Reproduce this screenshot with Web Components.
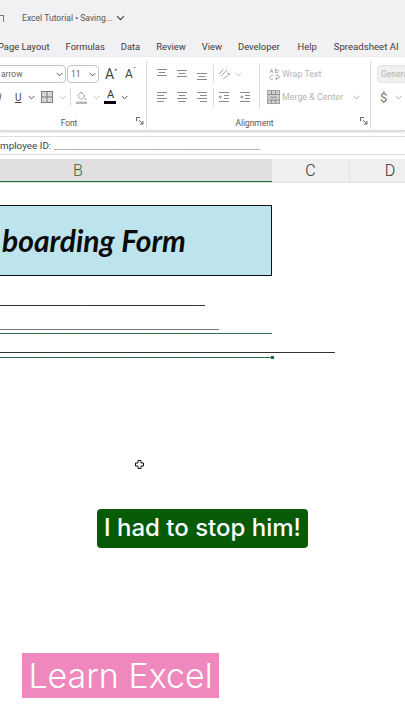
<!DOCTYPE html>
<html>
<head>
<meta charset="utf-8">
<title>Excel Tutorial</title>
<style>
  html, body { margin: 0; padding: 0; background: #fff; }
  body { width: 405px; height: 720px; overflow: hidden; position: relative; font-family: Roboto, sans-serif; }
</style>
</head>
<body>
  <excel-titlebar title-text="Excel Tutorial • Saving..."></excel-titlebar>
  <excel-tabs></excel-tabs>
  <excel-ribbon></excel-ribbon>
  <excel-formula-bar label="mployee ID:" blank="__________________________________________________________________"></excel-formula-bar>
  <excel-column-headers></excel-column-headers>
  <excel-sheet></excel-sheet>
  <sheet-cursor></sheet-cursor>
  <video-caption kind="green">I had to stop him!</video-caption>
  <video-caption kind="pink">Learn Excel</video-caption>

<script>
const CHEVRON = (color = '#555') =>
  `<svg width="7" height="5" viewBox="0 0 7 5"><path d="M.7 1l2.8 2.8L6.3 1" fill="none" stroke="${color}" stroke-width="1"/></svg>`;

const lines = (rows, color = '#8c8c8c') => {
  const body = rows.map(([x1, x2, y]) => `<path d="M${x1} ${y}H${x2}"/>`).join('');
  return `<svg width="12" height="12" viewBox="0 0 12 12" fill="none" stroke="${color}" stroke-width="1">${body}</svg>`;
};

const ICONS = {
  alignTop: lines([[1, 11, 1.5], [2.5, 9.5, 4.5], [1, 11, 7.5]]),
  alignMiddle: lines([[1, 11, 2.5], [2.5, 9.5, 5.5], [1, 11, 8.5]]),
  alignBottom: lines([[1, 11, 5.5], [2.5, 9.5, 8.5], [1, 11, 11.5]]),
  left: lines([[1, 11, 1.5], [1, 8, 4.5], [1, 11, 7.5], [1, 8, 10.5]]),
  center: lines([[1, 11, 1.5], [2.5, 9.5, 4.5], [1, 11, 7.5], [2.5, 9.5, 10.5]]),
  right: lines([[1, 11, 1.5], [4, 11, 4.5], [1, 11, 7.5], [4, 11, 10.5]]),
  outdent: `<svg width="12" height="12" viewBox="0 0 12 12" fill="none" stroke="#8c8c8c"><path d="M1 1.500h10M6 4.500h5M6 7.500h5M1 10.500h10M4 6H1M2.500 4.500L1 6l1.500 1.500"/></svg>`,
  indent: `<svg width="12" height="12" viewBox="0 0 12 12" fill="none" stroke="#8c8c8c"><path d="M1 1.500h10M6 4.500h5M6 7.500h5M1 10.500h10M1 6h3M2.500 4.500L4 6 2.500 7.500"/></svg>`,
  borders: `<svg width="12" height="12" viewBox="0 0 12 12" fill="#d8d8d8" stroke="#7d7d7d"><rect x=".5" y=".5" width="11" height="11"/><path d="M6 .5v11M.5 6h11" fill="none"/></svg>`,
  fill: `<svg width="13" height="13" viewBox="0 0 13 13"><path d="M6 1l4 4-3.500 3.500L2.500 5z" fill="none" stroke="#a5a5a5"/><path d="M10.500 6.500l1 2-1 .8-1-.8z" fill="#a5a5a5"/><rect x="1" y="10.500" width="11" height="2.500" fill="#b9b9b9"/></svg>`,
  orient: `<svg width="13" height="13" viewBox="0 0 13 13" fill="none" stroke="#a9a9a9"><path d="M1 6l4.500-4.500M3 8l6-6M5 11l7-5-3-1"/></svg>`,
  wrap: `<svg width="11" height="13" viewBox="0 0 11 13" fill="none" stroke="#b0b0b0"><path d="M1 5l1.500-4L4 5M1.500 3.500h2M6.500 .5v4.500M6.500 3.500a1.500 1.500 0 1 1 3 0 1.500 1.500 0 0 1-3 0z"/><path d="M4 7.500a2 2 0 0 0-3 2 2 2 0 0 0 3 2M6.500 7.500H9a1.500 1.500 0 0 1 0 3H6.500M8 9l-1.500 1.500L8 12"/></svg>`,
  merge: `<svg width="13" height="14" viewBox="0 0 13 14"><rect x=".5" y=".5" width="12" height="13" fill="#d0d0d0" stroke="#a0a0a0"/><path d="M1 4.500h11M1 10h11M4.500 1v3M8.500 1v3M4.500 10v3M8.500 10v3" stroke="#8f8f8f"/><path d="M3 7.200h7" stroke="#8f8f8f"/></svg>`,
  launcher: `<svg width="8" height="8" viewBox="0 0 8 8" fill="none" stroke="#666"><path d="M.5 4V.5H4M3 3l4 4M7 4v3H4"/></svg>`,
  italicEdge: `<svg width="3" height="9" viewBox="0 0 3 9" fill="none" stroke="#666"><path d="M2 .5L.5 8.500"/></svg>`
};

class ExcelTitlebar extends HTMLElement {
  connectedCallback () {
    const root = this.attachShadow({ mode: 'open' });
    root.innerHTML = `
      <style>
        :host { display: flex; align-items: center; height: 36px; background: #f1f0f2; color: #555; font-size: 8.600px; }
        .mark { width: 3px; height: 6px; border-top: 1px solid #777; border-right: 1px solid #777; margin-right: 18px; }
        svg { margin-left: 3px; margin-top: -1px; }
      </style>
      <span class="mark"></span><span>${this.getAttribute('title-text')}</span>${CHEVRON('#444').replace('width="7" height="5"', 'width="9" height="6"')}
    `;
  }
}

class ExcelTabs extends HTMLElement {
  connectedCallback () {
    const root = this.attachShadow({ mode: 'open' });
    const tabs = ['Page Layout', 'Formulas', 'Data', 'Review', 'View', 'Developer', 'Help', 'Spreadsheet AI'];
    root.innerHTML = `
      <style>
        :host { display: flex; gap: 16px; height: 21px; margin-left: -2px; align-items: center; background: #f1f0f2; color: #3c3c3c; font-size: 9.400px; white-space: nowrap; }
        .help { margin-left: 2px; }
        .ai { margin-left: 1px; font-size: 9.600px; }
      </style>
      ${tabs.map(t => `<span class="${t === 'Help' ? 'help' : t === 'Spreadsheet AI' ? 'ai' : ''}">${t}</span>`).join('')}
    `;
  }
}

class ExcelRibbon extends HTMLElement {
  connectedCallback () {
    const root = this.attachShadow({ mode: 'open' });
    root.innerHTML = `
      <style>
        :host { display: flex; height: 73px; background: #fff; border-bottom: 1px solid #d9d9d9; box-shadow: 0 1px 2px #cfcfcf; color: #555; font-size: 8px; overflow: hidden; position: relative; }
        .group { position: relative; display: flex; flex-direction: column; flex: none; box-sizing: border-box; height: 68px; margin-top: 4px; border-right: 1px solid #dcdcdc; }
        .font { width: 147px; }
        .align { width: 224px; }
        .number { width: 34px; border-right: 0; }
        .row { display: flex; align-items: center; height: 18px; flex: none; }
        .rows { display: flex; flex-direction: column; gap: 5px; padding-top: 4px; }
        .label { margin-top: auto; height: 13px; display: flex; align-items: center; padding-right: 8px; position: relative; }
        .label span { flex: 1; text-align: center; font-size: 8.400px; color: #555; }
        .label svg { position: absolute; right: 2px; top: 1px; }
        .combo { box-sizing: border-box; display: flex; align-items: center; justify-content: space-between; height: 18px; border: 1px solid #c4c4c4; border-radius: 4px; padding: 0 2px 0 0; font-size: 8.500px; color: #666; flex: none; }
        .grow { font-size: 14px; color: #444; line-height: 1; flex: none; }
        .grow sup { font-size: 7px; vertical-align: 5px; line-height: 0; }
        .sep { width: 1px; height: 18px; background: #dcdcdc; flex: none; }
        .tall { width: 1px; background: #dcdcdc; height: 46px; flex: none; }
        .muted { color: #b4b4b4; font-size: 8.900px; white-space: nowrap; flex: none; }
        .under { font-size: 10px; text-decoration: underline; color: #444; flex: none; }
        .color { display: flex; flex-direction: column; align-items: center; width: 12px; font-size: 11px; line-height: 10px; color: #333; flex: none; }
        .color i { display: block; width: 12px; height: 3px; background: #000; margin-top: 1px; }
        .row > svg { flex: none; }
        .cols { display: flex; }
        .ico { display: flex; flex: none; }
      </style>
      <div class="group font">
        <div class="rows">
          <div class="row">
            <div class="combo" style="width:72px;margin-left:-6px;padding-left:6px"><span>arrow</span>${CHEVRON()}</div>
            <div class="combo" style="width:32px;margin-left:1px;padding-left:3px"><span>11</span>${CHEVRON()}</div>
            <span class="grow" style="margin-left:6px">A<sup>^</sup></span>
            <span class="grow" style="margin-left:8px;font-size:12px">A<sup>ˇ</sup></span>
          </div>
          <div class="row">
            <span class="ico" style="margin-left:-1px">${ICONS.italicEdge}</span>
            <span class="under" style="margin-left:13px">U</span>
            <span class="ico" style="margin-left:7px">${CHEVRON()}</span>
            <span class="ico" style="margin-left:6px">${ICONS.borders}</span>
            <span class="ico" style="margin-left:6px">${CHEVRON('#c4c4c4')}</span>
            <span class="sep" style="margin-left:4px"></span>
            <span class="ico" style="margin-left:4px">${ICONS.fill}</span>
            <span class="ico" style="margin-left:5px">${CHEVRON('#c4c4c4')}</span>
            <span class="color" style="margin-left:4px">A<i></i></span>
            <span class="ico" style="margin-left:5px">${CHEVRON()}</span>
          </div>
        </div>
        <div class="label"><span>Font</span>${ICONS.launcher}</div>
      </div>
      <div class="group align">
        <div class="cols">
          <div class="rows">
            <div class="row">
              <span class="ico" style="margin-left:9px">${ICONS.alignTop}</span>
              <span class="ico" style="margin-left:8px">${ICONS.alignMiddle}</span>
              <span class="ico" style="margin-left:8px">${ICONS.alignBottom}</span>
              <span class="sep" style="margin-left:5px"></span>
              <span class="ico" style="margin-left:4px">${ICONS.orient}</span>
              <span class="ico" style="margin-left:4px">${CHEVRON('#c4c4c4')}</span>
            </div>
            <div class="row">
              <span class="ico" style="margin-left:9px">${ICONS.left}</span>
              <span class="ico" style="margin-left:8px">${ICONS.center}</span>
              <span class="ico" style="margin-left:8px">${ICONS.right}</span>
              <span class="sep" style="margin-left:5px"></span>
              <span class="ico" style="margin-left:4px">${ICONS.outdent}</span>
              <span class="ico" style="margin-left:9px">${ICONS.indent}</span>
            </div>
          </div>
          <span class="tall" style="margin-left:8px;margin-top:2px"></span>
          <div class="rows">
            <div class="row">
              <span class="ico" style="margin-left:9px">${ICONS.wrap}</span>
              <span class="muted" style="margin-left:2px">Wrap Text</span>
            </div>
            <div class="row">
              <span class="ico" style="margin-left:7px">${ICONS.merge}</span>
              <span class="muted" style="margin-left:2px">Merge &amp; Center</span>
              <span class="ico" style="margin-left:10px">${CHEVRON('#aaa')}</span>
            </div>
          </div>
        </div>
        <div class="label"><span>Alignment</span>${ICONS.launcher}</div>
      </div>
      <div class="group number">
        <div class="rows">
          <div class="row">
            <div class="combo" style="width:60px;margin-left:6px;padding-left:3px;background:#f0f0f0;border-color:#e4e4e4;color:#b0b0b0;justify-content:flex-start">Genera</div>
          </div>
          <div class="row">
            <span style="margin-left:9px;font-size:13px;color:#777">$</span>
            <span class="ico" style="margin-left:8px">${CHEVRON('#aaa')}</span>
          </div>
        </div>
      </div>
    `;
  }
}

class ExcelFormulaBar extends HTMLElement {
  connectedCallback () {
    const root = this.attachShadow({ mode: 'open' });
    root.innerHTML = `
      <style>
        :host { display: block; box-sizing: border-box; height: 19px; margin-top: 5px; background: #fff; border-top: 1px solid #dedede; border-bottom: 1px solid #dedede; font-size: 9.900px; line-height: 17px; color: #444; white-space: nowrap; overflow: hidden; }
        .clip { display: block; width: 260px; overflow: hidden; }
        .blank { color: #999; }
      </style>
      <span class="clip">${this.getAttribute('label')} <span class="blank">${this.getAttribute('blank')}</span></span>
    `;
  }
}

class ExcelColumnHeaders extends HTMLElement {
  connectedCallback () {
    const root = this.attachShadow({ mode: 'open' });
    root.innerHTML = `
      <style>
        :host { display: flex; box-sizing: border-box; height: 24px; margin-top: 4px; background: #efeef0; border-bottom: 1px solid #e2e2e2; font-size: 16px; font-weight: 300; color: #333; }
        span { display: flex; align-items: center; justify-content: center; box-sizing: border-box; flex: none; height: 23px; }
        .b { width: 272px; padding-left: 73px; background: #e1dfe0; color: #1e6e3e; border-bottom: 1px solid #1f6b3c; justify-content: flex-start; }
        .c { width: 78px; border-right: 1px solid #e2e2e2; }
        .d { width: 80px; }
      </style>
      <span class="b">B</span><span class="c">C</span><span class="d">D</span>
    `;
  }
}

class ExcelSheet extends HTMLElement {
  connectedCallback () {
    const root = this.attachShadow({ mode: 'open' });
    const blank = '_'.repeat(60);
    root.innerHTML = `
      <style>
        :host { display: block; padding-top: 22px; font-family: Lato, sans-serif; color: #222; }
        .title { box-sizing: border-box; width: 274px; height: 71px; margin-left: -2px; padding: 0 0 2px 3px; display: flex; align-items: center; background: #bde4ec; border: 1.500px solid #111; font-size: 30px; font-weight: 700; font-style: italic; color: #0b0b0b; white-space: nowrap; }
        .line { overflow: hidden; white-space: nowrap; font-family: "Liberation Sans", sans-serif; font-size: 14px; height: 18px; line-height: 18px; color: #333; }
        .rule { width: 272px; height: 1px; background: #2c7249; }
        .first { width: 205px; margin-top: 13px; }
        .second { width: 219px; margin-top: 6px; height: 20px; color: #777; }
        .third { width: 335px; margin-top: 2px; height: 21px; }
        .end { position: relative; }
        .end::after { content: ""; position: absolute; right: -2px; top: -1px; width: 3px; height: 3px; background: #1f6b3c; }
      </style>
      <div class="title">boarding Form</div>
      <div class="line first">${blank}</div>
      <div class="line second">${blank}</div>
      <div class="rule"></div>
      <div class="line third">${blank}</div>
      <div class="rule end"></div>
    `;
  }
}

class SheetCursor extends HTMLElement {
  connectedCallback () {
    const root = this.attachShadow({ mode: 'open' });
    root.innerHTML = `
      <style>:host { position: absolute; left: 135px; top: 460px; width: 9px; height: 9px; display: block; line-height: 0; }</style>
      <svg width="9" height="9" viewBox="0 0 9 9"><path d="M3 .5h3v2.500h2.500v3H6v2.500H3V6H.5V3H3z" fill="#fff" stroke="#111" stroke-width="1"/></svg>
    `;
  }
}

class VideoCaption extends HTMLElement {
  connectedCallback () {
    const root = this.attachShadow({ mode: 'open' });
    root.innerHTML = `
      <style>
        :host { position: absolute; display: flex; align-items: center; justify-content: center; box-sizing: border-box; color: #fff; white-space: nowrap; }
        :host([kind="green"]) { left: 97px; top: 509px; width: 211px; height: 39px; padding-bottom: 2px; background: #075b07; border-radius: 4px; font-family: Inter, sans-serif; font-size: 24px; font-weight: 500; }
        :host([kind="pink"]) { left: 22px; top: 653px; width: 197px; height: 45px; background: #ef88bc; font-family: Inter, sans-serif; font-size: 34px; font-weight: 300; }
      </style>
      <slot></slot>
    `;
  }
}

customElements.define('excel-titlebar', ExcelTitlebar);
customElements.define('excel-tabs', ExcelTabs);
customElements.define('excel-ribbon', ExcelRibbon);
customElements.define('excel-formula-bar', ExcelFormulaBar);
customElements.define('excel-column-headers', ExcelColumnHeaders);
customElements.define('excel-sheet', ExcelSheet);
customElements.define('sheet-cursor', SheetCursor);
customElements.define('video-caption', VideoCaption);
</script>
</body>
</html>
